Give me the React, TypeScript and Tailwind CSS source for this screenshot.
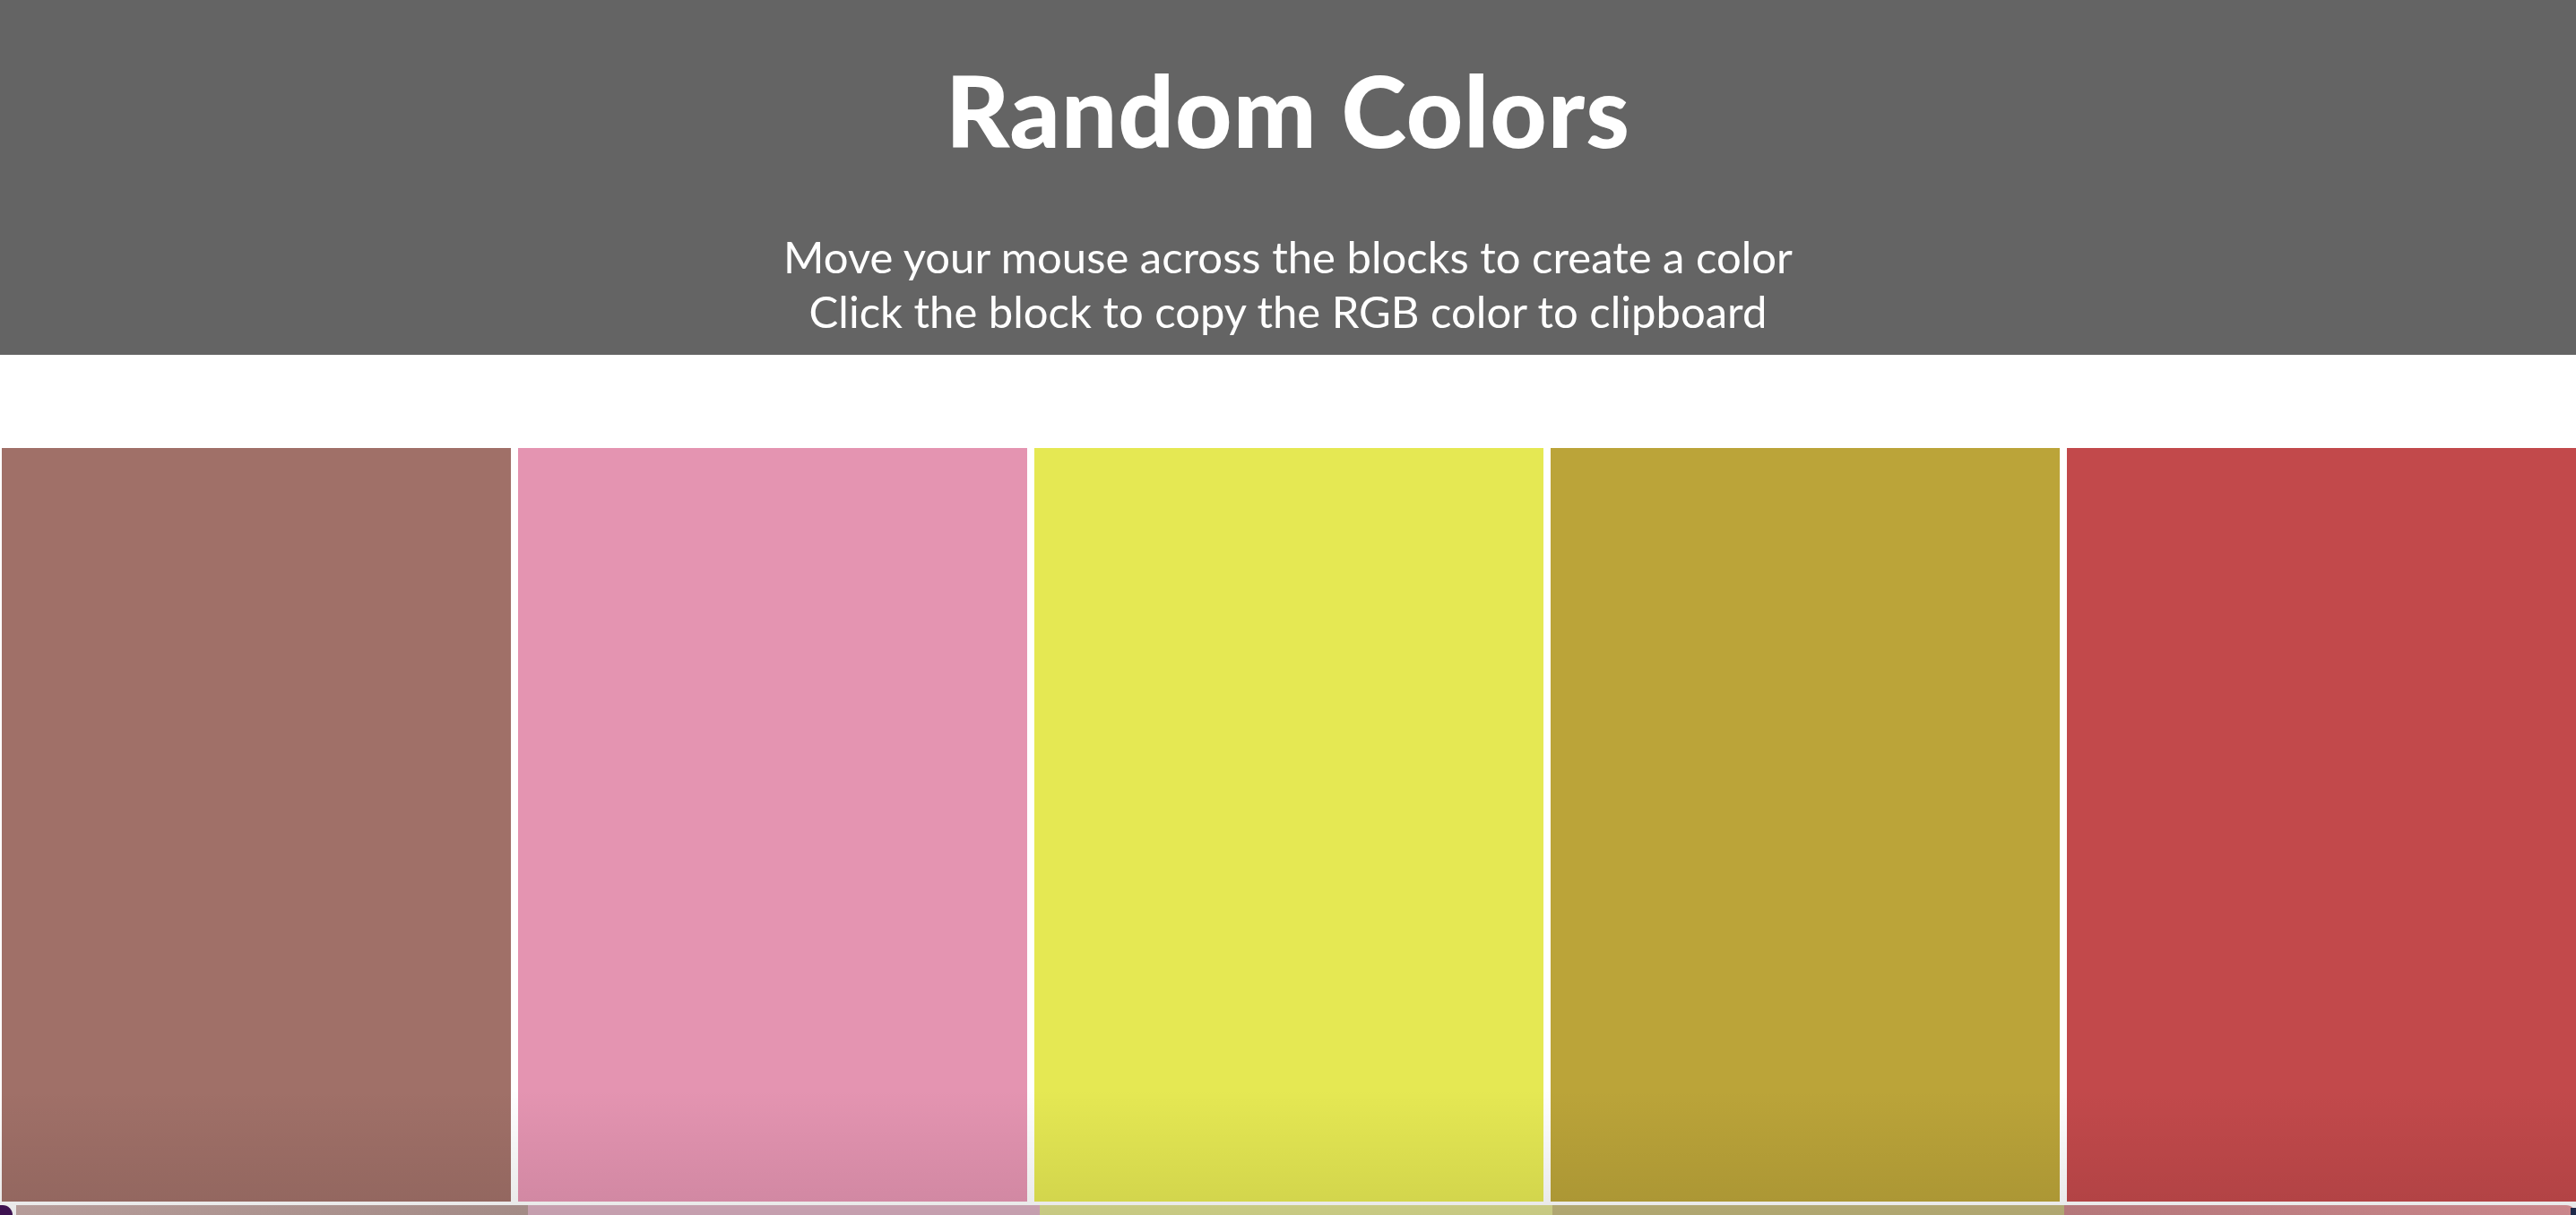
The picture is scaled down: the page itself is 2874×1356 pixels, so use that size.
import React from 'react';

const blocks = ['#a07068', '#e494b1', '#e5e853', '#bba439', '#c2494b'];
const strip = [
    'bg-gradient-to-r from-[#c7aba8] to-[#b39893]',
    'bg-[#d8aebf]',
    'bg-[#dadc8f]',
    'bg-[#c1b67c]',
    'bg-gradient-to-r from-[#c68386] to-[#dd9398]',
];

const App: React.FC = () => {
    return (
        <div className="relative h-[1356px] w-full overflow-hidden bg-white font-['Lato',sans-serif]">
            <header className="h-[396px] bg-[#646464] flex flex-col items-center text-white">
                <h1 className="mt-[67px] text-[110px] leading-none font-black tracking-[1px]">Random Colors</h1>
                <div className="mt-[79px] text-[49px] leading-[61px] text-center">
                    <p>Move your mouse across the blocks to create a color</p>
                    <p>Click the block to copy the RGB color to clipboard</p>
                </div>
            </header>

            <div className="mt-[104px] flex gap-2 pl-[2px] h-[841px]">
                {blocks.map((c) => (
                    <div key={c} className="w-[568px] h-full cursor-pointer" style={{ backgroundColor: c }} />
                ))}
            </div>

            <div className="mt-[4px] flex pl-[18px] h-[11px]">
                {strip.map((s, i) => (
                    <div key={i} className={`w-[576px] h-full ${s} ${i === 4 ? 'rounded-tr-[14px]' : ''}`} />
                ))}
            </div>

            {/* shadow at the bottom of the window */}
            <div className="pointer-events-none absolute inset-x-0 bottom-0 h-[140px] bg-gradient-to-b from-transparent to-black/[0.09]" />
            <div className="absolute left-0 bottom-0 w-[14px] h-[11px] bg-[#3d1250] rounded-tr-[14px]" />
            <div className="absolute right-0 bottom-0 w-[6px] h-[8px] bg-[#1f2a4a]" />
        </div>
    );
};

export default App;
